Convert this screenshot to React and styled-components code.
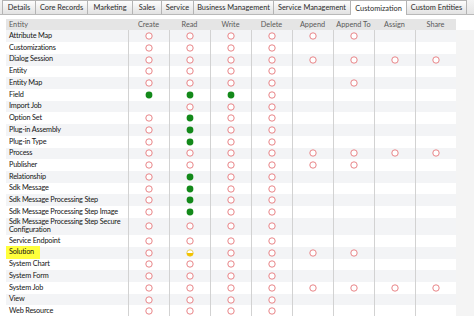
import React from "react";
import styled, { createGlobalStyle } from "styled-components";

const Global = createGlobalStyle`
  html, body { margin: 0; padding: 0; background: #ffffff; }
  body { font-family: "Lato", "Noto Sans", sans-serif; width: 474px; height: 316px; overflow: hidden; }
`;

const Page = styled.div`
  display: flex;
  flex-direction: column;
  width: 474px;
  height: 316px;
  overflow: hidden;
`;

const TabBar = styled.div`
  display: flex;
  align-items: flex-end;
  height: 15px;
  padding-left: 2px;
  background: linear-gradient(#f4f4f4, #e6e6e6);
  border-bottom: 1px solid #b9b9b9;
  box-sizing: border-box;
`;

const Tab = styled.div`
  width: ${(p) => p.$w}px;
  height: ${(p) => (p.$active ? 15 : 14)}px;
  box-sizing: border-box;
  display: flex;
  align-items: center;
  justify-content: center;
  font-size: 7.4px;
  color: #2b2b2b;
  border: 1px solid #b4b4b4;
  border-left: ${(p) => (p.$first ? "1px solid #b4b4b4" : "none")};
  border-bottom: none;
  background: ${(p) => (p.$active ? "#ffffff" : "linear-gradient(#fdfdfd, #e2e2e2)")};
  margin-bottom: ${(p) => (p.$active ? -1 : 0)}px;
  white-space: nowrap;
`;

const Content = styled.div`
  display: flex;
  flex-direction: column;
  padding-top: 4px;
`;

const Row = styled.div`
  display: flex;
  height: ${(p) => p.$h}px;
`;

const HeadCell = styled.div`
  width: ${(p) => p.$w}px;
  flex: none;
  display: flex;
  align-items: center;
  justify-content: ${(p) => (p.$left ? "flex-start" : "center")};
  padding-left: ${(p) => (p.$left ? 3 : 0)}px;
  box-sizing: border-box;
  background: #e5e5e5;
  color: #5a5a5a;
  font-size: 7.3px;
  white-space: nowrap;
`;

const Gutter = styled.div`
  width: 6px;
  flex: none;
  background: #ffffff;
`;

const Filler = styled.div`
  flex: 1;
  background: ${(p) => (p.$head ? "#ffffff" : "#f4f4f4")};
`;

const NameCell = styled.div`
  width: 122px;
  flex: none;
  box-sizing: border-box;
  padding-left: 3px;
  display: flex;
  align-items: center;
  background: ${(p) => (p.$odd ? "#ffffff" : "#f3f4f6")};
  font-size: 7.3px;
  letter-spacing: -0.18px;
  line-height: 8.4px;
  color: #141414;
  white-space: nowrap;
`;

const Highlight = styled.span`
  background: #ffff3c;
  margin-left: -3px;
  padding: 2px 6px 2px 3px;
`;

const PermCell = styled.div`
  width: 41px;
  flex: none;
  box-sizing: border-box;
  border-left: 1px solid #d2d2d2;
  display: flex;
  align-items: center;
  justify-content: center;
  background: ${(p) => (p.$odd ? "#ffffff" : "#f3f4f6")};
`;

const Circle = ({ kind }) => {
  if (kind === "o")
    return (
      <svg width="8" height="8" viewBox="0 0 8 8">
        <circle cx="4" cy="4" r="3.2" fill="#fff" stroke="#e5777a" strokeWidth="0.9" />
      </svg>
    );
  if (kind === "g")
    return (
      <svg width="8" height="8" viewBox="0 0 8 8">
        <circle cx="4" cy="4" r="3.4" fill="#13891a" />
      </svg>
    );
  if (kind === "y")
    return (
      <svg width="8" height="8" viewBox="0 0 8 8">
        <circle cx="4" cy="4" r="3.2" fill="#fff" stroke="#e8c94a" strokeWidth="0.9" />
        <path d="M0.8 4 A3.2 3.2 0 0 0 7.2 4 Z" fill="#f2c200" />
      </svg>
    );
  return null;
};

const tabs = [
  ["Details", 34],
  ["Core Records", 52],
  ["Marketing", 45],
  ["Sales", 29],
  ["Service", 32],
  ["Business Management", 80],
  ["Service Management", 77],
  ["Customization", 56],
  ["Custom Entities", 60],
];

const cols = ["Create", "Read", "Write", "Delete", "Append", "Append To", "Assign", "Share"];

const rows = [
  ["Attribute Map", "oooooo"],
  ["Customizations", "oooo"],
  ["Dialog Session", "oooooooo"],
  ["Entity", "oooo"],
  ["Entity Map", "oooo-o"],
  ["Field", "gggo"],
  ["Import Job", "-ooo"],
  ["Option Set", "ogoo"],
  ["Plug-in Assembly", "ogoo"],
  ["Plug-in Type", "ogoo"],
  ["Process", "oooooooo"],
  ["Publisher", "oooooo"],
  ["Relationship", "ogoo"],
  ["Sdk Message", "ogoo"],
  ["Sdk Message Processing Step", "ogoo"],
  ["Sdk Message Processing Step Image", "ogoo"],
  ["Sdk Message Processing Step Secure Configuration", "oooo", true],
  ["Service Endpoint", "oooo"],
  ["Solution", "oyoooo", false, true],
  ["System Chart", "oooo"],
  ["System Form", "oooo"],
  ["System Job", "oooooooo"],
  ["View", "oooo"],
  ["Web Resource", "oooo"],
];

export default function App() {
  return (
    <Page>
      <Global />
      <TabBar>
        {tabs.map(([t, w], i) => (
          <Tab key={t} $w={w} $first={i === 0} $active={t === "Customization"}>
            {t}
          </Tab>
        ))}
      </TabBar>
      <Content>
        <Row $h={11.4}>
          <Gutter />
          <HeadCell $w={122} $left>
            Entity
          </HeadCell>
          {cols.map((c) => (
            <HeadCell key={c} $w={41}>
              {c}
            </HeadCell>
          ))}
          <Filler $head />
        </Row>
        {rows.map(([name, perms, tall, hl], i) => {
          const odd = i % 2 === 1;
          return (
            <Row key={name} $h={tall ? 17.2 : 11.73}>
              <Gutter />
              <NameCell $odd={odd}>
                {hl ? (
                  <Highlight>{name}</Highlight>
                ) : tall ? (
                  <span>
                    Sdk Message Processing Step Secure
                    <br />
                    Configuration
                  </span>
                ) : (
                  name
                )}
              </NameCell>
              {cols.map((c, j) => (
                <PermCell key={c} $odd={odd}>
                  <Circle kind={perms[j]} />
                </PermCell>
              ))}
              <Filler />
            </Row>
          );
        })}
      </Content>
    </Page>
  );
}
